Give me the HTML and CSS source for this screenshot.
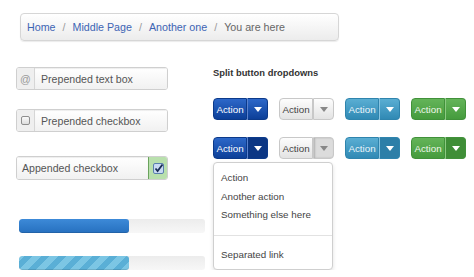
FILE: index.html
```html
<!DOCTYPE html>
<html lang="en">
<head>
    <meta charset="UTF-8">
    <title>Components</title>
    <link rel="stylesheet" href="styles.css">
</head>
<body>
    <div class="page">
        <ul class="breadcrumb">
            <li><a href="#">Home</a><span class="sep">/</span></li>
            <li><a href="#">Middle Page</a><span class="sep">/</span></li>
            <li><a href="#">Another one</a><span class="sep">/</span></li>
            <li class="active">You are here</li>
        </ul>

        <div class="columns">
            <div class="left">
                <div class="input-group">
                    <span class="add-on">@</span>
                    <span class="field">Prepended text box</span>
                </div>
                <div class="input-group second">
                    <span class="add-on"><span class="box"></span></span>
                    <span class="field">Prepended checkbox</span>
                </div>
                <div class="input-group third">
                    <span class="field">Appended checkbox</span>
                    <span class="add-on checked">
                        <svg width="11" height="11" viewBox="0 0 11 11">
                            <rect x="0.5" y="0.5" width="10" height="10" rx="1.5" fill="#c9daf3" stroke="#5b7fae"/>
                            <path d="M2.5 5.5 L4.6 8 L9.5 1.5" fill="none" stroke="#1a2d55" stroke-width="1.8"/>
                        </svg>
                    </span>
                </div>

                <div class="progress">
                    <div class="bar" style="width: 59%"></div>
                </div>
                <div class="progress striped">
                    <div class="bar" style="width: 59%"></div>
                </div>
            </div>

            <div class="right">
                <h4>Split button dropdowns</h4>
                <div class="btn-row">
                    <div class="btn-group primary"><span class="btn">Action</span><span class="btn caret-btn"><i class="caret"></i></span></div>
                    <div class="btn-group default"><span class="btn">Action</span><span class="btn caret-btn"><i class="caret"></i></span></div>
                    <div class="btn-group info"><span class="btn">Action</span><span class="btn caret-btn"><i class="caret"></i></span></div>
                    <div class="btn-group success"><span class="btn">Action</span><span class="btn caret-btn"><i class="caret"></i></span></div>
                </div>
                <div class="btn-row open">
                    <div class="btn-group primary">
                        <span class="btn">Action</span><span class="btn caret-btn active"><i class="caret"></i></span>
                        <ul class="dropdown-menu">
                            <li>Action</li>
                            <li>Another action</li>
                            <li>Something else here</li>
                            <li class="divider"></li>
                            <li>Separated link</li>
                        </ul>
                    </div>
                    <div class="btn-group default"><span class="btn">Action</span><span class="btn caret-btn active"><i class="caret"></i></span></div>
                    <div class="btn-group info"><span class="btn">Action</span><span class="btn caret-btn active"><i class="caret"></i></span></div>
                    <div class="btn-group success"><span class="btn">Action</span><span class="btn caret-btn active"><i class="caret"></i></span></div>
                </div>
            </div>
        </div>
    </div>
</body>
</html>
```

FILE: styles.css
```css
body {
    margin: 0;
    background-color: #fff;
    font-family: 'Liberation Sans', Arial, sans-serif;
    color: #444;
}

.page {
    padding: 13px 0 0 16px;
}

/* breadcrumb */

.breadcrumb {
    list-style: none;
    margin: 0 0 0 4px;
    padding: 0 7px 0 6px;
    width: 304px;
    height: 26px;
    display: flex;
    align-items: center;
    border: 1px solid #d6d6d6;
    border-radius: 4px;
    background: linear-gradient(#fff, #ececec);
    box-shadow: 0 1px 1px rgba(0,0,0,0.08);
    font-size: 10.7px;
}

.breadcrumb a {
    color: #3d64b4;
    text-decoration: none;
}

.breadcrumb .sep {
    color: #999;
    padding: 0 7px;
}

.breadcrumb .active {
    color: #666;
}

.columns {
    display: flex;
    margin-top: 26px;
}

/* inputs */

.left {
    width: 192px;
}

.input-group {
    display: flex;
    width: 152px;
    height: 23px;
    border: 1px solid #cfcfcf;
    border-radius: 3px;
    box-sizing: border-box;
    font-size: 10.6px;
    overflow: hidden;
}

.input-group.second {
    margin-top: 19px;
}

.input-group.third {
    margin-top: 24px;
    height: 24px;
}

.add-on {
    width: 17px;
    flex-shrink: 0;
    display: flex;
    align-items: center;
    justify-content: center;
    background: #efefef;
    border-right: 1px solid #d6d6d6;
    color: #999;
}

.add-on .box {
    width: 7px;
    height: 7px;
    border: 1px solid #8e8e8e;
    border-radius: 2px;
    background: linear-gradient(#fafafa, #ddd);
}

.add-on.checked {
    width: 18px;
    border-right: 0;
    border-left: 1px solid #6aa35d;
    background: #b9e0ad;
}

.field {
    flex: 1;
    display: flex;
    align-items: center;
    padding-left: 6px;
    color: #555;
    background: linear-gradient(#fff, #f1f1f1);
    box-shadow: inset 0 1px 1px rgba(0,0,0,0.07);
}

.third .field {
    padding-left: 5px;
}

/* progress */

.progress {
    margin: 39px 0 0 3px;
    width: 186px;
    height: 14px;
    border-radius: 3px;
    background: linear-gradient(#ececec, #f7f7f7);
    overflow: hidden;
}

.progress + .progress {
    margin-top: 23px;
}

.progress .bar {
    height: 100%;
    border-radius: 3px;
    background: linear-gradient(#3d8ad8, #2670bf);
    box-shadow: inset 0 -1px 0 rgba(0,0,0,0.12);
}

.progress.striped .bar {
    background-color: #5db1d7;
    background-image: repeating-linear-gradient(-45deg, #7cc6e4 0, #7cc6e4 6px, #5aafd6 6px, #5aafd6 12px);
}

/* buttons */

.right {
    margin-left: 5px;
}

.right h4 {
    margin: 0;
    font-size: 9.4px;
    line-height: 12px;
    font-weight: bold;
    color: #333;
}

.btn-row {
    display: flex;
    gap: 11px;
    margin-top: 19px;
}

.btn-row.open {
    margin-top: 17px;
}

.btn-group {
    position: relative;
    display: flex;
    height: 22px;
    width: 55px;
    border-radius: 4px;
    font-size: 9.8px;
}

.btn {
    flex: 1;
    display: flex;
    align-items: center;
    justify-content: center;
    border-radius: 4px 0 0 4px;
}

.caret-btn {
    flex: 0 0 19px;
    border-radius: 0 4px 4px 0;
}

.caret {
    width: 0;
    height: 0;
    border-left: 4px solid transparent;
    border-right: 4px solid transparent;
    border-top: 5px solid #fff;
}

.primary .btn {
    color: #fff;
    background: linear-gradient(#2d68c9, #0c3f98);
    border: 1px solid #0c3a8a;
}

.primary .caret-btn {
    border-left: 1px solid #5a82cf;
}

.primary .caret-btn.active {
    background: #0b3684;
}

.default .btn {
    color: #444;
    background: linear-gradient(#fdfdfd, #e3e3e3);
    border: 1px solid #c8c8c8;
}

.default .caret-btn {
    border-left: 1px solid #c8c8c8;
}

.default .caret-btn.active {
    background: #dcdcdc;
    box-shadow: inset 1px 0 2px rgba(0,0,0,0.2);
}

.default .caret {
    border-top-color: #888;
}

.info .btn {
    color: #eaf5fa;
    background: linear-gradient(#5aaed3, #3089b4);
    border: 1px solid #2f84ad;
}

.info .caret-btn {
    border-left: 1px solid #8ac6e2;
}

.info .caret-btn.active {
    background: #2d7fa8;
}

.success .btn {
    color: #eef7ea;
    background: linear-gradient(#64b459, #459b3d);
    border: 1px solid #41913a;
}

.success .caret-btn {
    border-left: 1px solid #8cc982;
}

.success .caret-btn.active {
    background: #3f8e37;
}

/* dropdown */

.dropdown-menu {
    position: absolute;
    top: 25px;
    left: 0;
    width: 120px;
    height: 108px;
    box-sizing: border-box;
    margin: 0;
    padding: 6px 0 0;
    list-style: none;
    background: #fff;
    border: 1px solid #cfcfcf;
    border-radius: 4px;
    box-shadow: 0 2px 4px rgba(0,0,0,0.12);
    font-size: 9.8px;
    color: #444;
}

.dropdown-menu li {
    padding: 0 7px;
    line-height: 18.5px;
}

.dropdown-menu .divider {
    height: 1px;
    margin: 10px 0 10px;
    padding: 0;
    background: #e2e2e2;
}
```
